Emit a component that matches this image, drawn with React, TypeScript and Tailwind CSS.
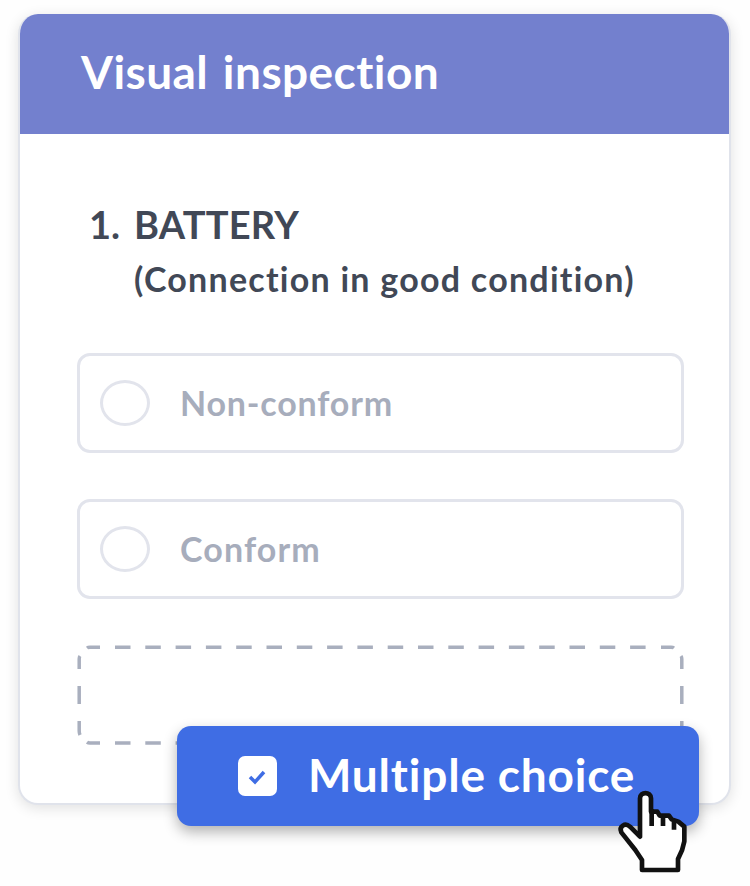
const fontStack = "font-['Lato','Open_Sans',sans-serif]";

function Option({ label, width }: { label: string; width: number }) {
  return (
    <div className="flex h-[100px] w-[607px] items-center rounded-[13px] border-[3px] border-[#e2e4ec] pl-[20px]">
      <span className="h-[46px] w-[50px] shrink-0 rounded-[50%] border-[3px] border-[#e2e4ec]" />
      <Line
        text={label}
        width={width}
        className="ml-[30px] pb-px text-[34px] leading-[40px] font-bold text-[#a7adbc]"
      />
    </div>
  );
}

function Line({ text, width, className }: { text: string; width: number; className: string }) {
  const fit = (el: HTMLSpanElement | null) => {
    if (!el) return;
    const apply = () => {
      el.style.letterSpacing = "0px";
      const natural = el.getBoundingClientRect().width;
      el.style.letterSpacing = `${(width - natural) / text.length}px`;
    };
    apply();
    document.fonts.ready.then(apply);
  };
  return (
    <span ref={fit} className={`inline-block whitespace-nowrap ${className}`}>
      {text}
    </span>
  );
}

function DropZone() {
  return (
    <svg className="block h-[100px] w-[607px]" viewBox="0 0 607 100" fill="none" stroke="#a9afbe" strokeWidth="3.5">
      <path d="M10 3Q11 2.2 13 2.2H23M584 2.2H594Q596 2.2 597 3" />
      <path d="M38 2.2H583M38 98H583" strokeDasharray="15.5 14.8" />
      <path d="M10 97.2Q11 98 13 98H23" />
      <path d="M3 11Q2.2 12 2.2 14V24M2.2 41V59M2.2 76V86Q2.2 88 3 90" />
      <path d="M604 11Q604.8 12 604.8 14V24M604.8 41V59M604.8 76V90" />
    </svg>
  );
}

export default function App() {
  return (
    <main className={`relative h-[886px] w-[750px] overflow-hidden bg-[#fefefe] pt-[14px] pl-[18px] ${fontStack}`}>
      <section className="h-[791px] w-[713px] overflow-hidden rounded-[20px] border-2 border-t-0 border-[#e0e3eb] bg-white shadow-[0_3px_14px_rgba(0,0,0,0.12)]">
        <header className="flex h-[120px] items-center bg-[#7380ce] pb-[4px] pl-[61px] text-white">
          <Line text="Visual inspection" width={359} className="text-[46px] leading-[56px] font-bold [word-spacing:3px]" />
        </header>
        <div className="pl-[57px]">
          <div className="flex pt-[66px] pl-[12px] text-[#414856]">
            <div className="w-[45px] text-[38px] leading-[48px] font-bold">1.</div>
            <div className="flex flex-col items-start">
              <Line text="BATTERY" width={165} className="text-[38px] leading-[48px] font-bold" />
              <Line text="(Connection in good condition)" width={502} className="mt-[9px] text-[34px] leading-[44px] font-bold" />
            </div>
          </div>
          <div className="mt-[52px] flex flex-col gap-[46px]">
            <Option label="Non-conform" width={213} />
            <Option label="Conform" width={141} />
            <DropZone />
          </div>
        </div>
      </section>
      <button className="absolute top-[726px] left-[177px] flex h-[100px] w-[522px] items-center rounded-[14px] bg-[#3f6de4] pl-[61px] text-white shadow-[0_6px_14px_rgba(0,0,0,0.3)]">
        <svg width="39" height="40" viewBox="0 0 39 40">
          <rect width="39" height="40" rx="7" fill="white" />
          <path d="m12 21 5 5 9-10" fill="none" stroke="#3f6de4" strokeWidth="3.5" />
        </svg>
        <Line text="Multiple choice" width={328} className="ml-[31px] pb-[2px] text-[46px] leading-[56px] font-bold" />
      </button>
      <svg className="absolute top-[780px] left-[600px]" width="100" height="100" viewBox="0 0 300 300">
        <path
          d="M126 270V240L106 210L64 157C56 139 75 127 90 140L120 170V55C120 34 153 34 153 55V95H172L179 107H207L215 118L235 125L253 140V184L246 211L234 237V270Z"
          fill="white"
          stroke="#111"
          strokeWidth="14"
          strokeLinejoin="round"
        />
        <path d="M155 88V138M189 104V138M222 118V149" stroke="#111" strokeWidth="14" />
      </svg>
    </main>
  );
}
